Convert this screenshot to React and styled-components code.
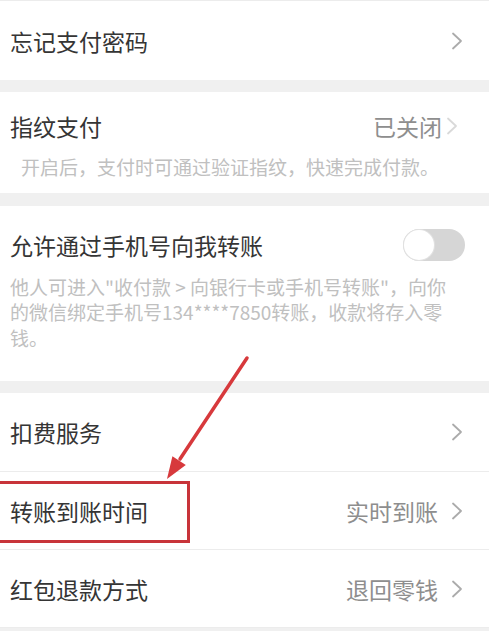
import React from "react";
import styled, { createGlobalStyle } from "styled-components";

const Global = createGlobalStyle`
  html, body {
    margin: 0;
    padding: 0;
    background: #f0f0f0;
  }
  body {
    font-family: "Noto Sans CJK SC", "Noto Sans", sans-serif;
  }
`;

const Page = styled.div`
  position: relative;
  width: 489px;
  height: 631px;
  overflow: hidden;
  background: #f0f0f0;
  display: flex;
  flex-direction: column;
`;

const Section = styled.section`
  background: #fff;
  margin-top: ${(p) => p.gap || 0}px;
  border-top: ${(p) => (p.topLine ? "1px solid #ececec" : "none")};
  padding: ${(p) => p.pad || "0"};
`;

const Row = styled.div`
  height: ${(p) => p.h || 78}px;
  display: flex;
  align-items: center;
  justify-content: space-between;
  padding: 0 26px 0 10px;
  border-top: ${(p) => (p.divider ? "1px solid #ececec" : "none")};
  box-sizing: border-box;
`;

const HeadRow = styled.div`
  display: flex;
  align-items: center;
  justify-content: space-between;
  height: 32px;
  padding: 0 ${(p) => p.right || 26}px 0 10px;
`;

const Title = styled.span`
  font-size: 23px;
  color: #353535;
  line-height: 32px;
`;

const Right = styled.span`
  display: flex;
  align-items: center;
  gap: ${(p) => p.gap || 13}px;
`;

const Value = styled.span`
  font-size: 23px;
  color: #8e8e8e;
`;

const Desc = styled.p`
  margin: ${(p) => p.mt || 12}px 0 0;
  padding: 0 20px 0 ${(p) => p.indent || 10}px;
  font-size: 19px;
  line-height: 25.5px;
  color: #c0c0c0;
`;

const Toggle = styled.span`
  width: 62px;
  height: 32px;
  border-radius: 16px;
  background: #d6d6d6;
  display: flex;
  align-items: center;
  padding-left: 1px;
  box-sizing: border-box;
`;

const Knob = styled.span`
  width: 30px;
  height: 30px;
  border-radius: 50%;
  background: #fff;
  box-shadow: 0 0 0 1px #e2e2e2;
`;

const BottomLine = styled.div`
  height: 1px;
  background: #ececec;
`;

const Overlay = styled.svg`
  position: absolute;
  left: 0;
  top: 0;
  pointer-events: none;
`;

function Chevron({ light }) {
  return (
    <svg width="12" height="18" viewBox="0 0 12 18">
      <path
        d="M2 1.5 L10 9 L2 16.5"
        fill="none"
        stroke={light ? "#d9d9d9" : "#ababab"}
        strokeWidth="1.8"
        strokeLinecap="round"
        strokeLinejoin="round"
      />
    </svg>
  );
}

function NavRow({ title, value, divider }) {
  return (
    <Row divider={divider}>
      <Title>{title}</Title>
      <Right>
        {value && <Value>{value}</Value>}
        <Chevron />
      </Right>
    </Row>
  );
}

export default function App() {
  return (
    <Page>
      <Global />
      <Section topLine>
        <Row h={79}>
          <Title>忘记支付密码</Title>
          <Chevron />
        </Row>
      </Section>

      <Section gap={12} pad="18px 0 13px">
        <HeadRow right={31}>
          <Title>指纹支付</Title>
          <Right gap={4}>
            <Value>已关闭</Value>
            <Chevron light />
          </Right>
        </HeadRow>
        <Desc indent={21}>开启后，支付时可通过验证指纹，快速完成付款。</Desc>
      </Section>

      <Section gap={13} pad="23px 0 31px">
        <HeadRow right={24}>
          <Title>允许通过手机号向我转账</Title>
          <Toggle>
            <Knob />
          </Toggle>
        </HeadRow>
        <Desc mt={13}>
          他人可进入"收付款 &gt; 向银行卡或手机号转账"，向你
          <br />
          的微信绑定手机号134****7850转账，收款将存入零
          <br />
          钱。
        </Desc>
      </Section>

      <Section gap={12}>
        <NavRow title="扣费服务" />
        <NavRow title="转账到账时间" value="实时到账" divider />
        <NavRow title="红包退款方式" value="退回零钱" divider />
        <BottomLine />
      </Section>

      <Overlay width="489" height="631" viewBox="0 0 489 631">
        <rect
          x="-3"
          y="482.5"
          width="191.5"
          height="59"
          fill="none"
          stroke="#c8343a"
          strokeWidth="3"
        />
        <line
          x1="247"
          y1="358"
          x2="180"
          y2="459"
          stroke="#d7393c"
          strokeWidth="3.5"
          strokeLinecap="round"
        />
        <polygon points="167,479 172.4,456.3 185.8,465.1" fill="#d7393c" />
      </Overlay>
    </Page>
  );
}
